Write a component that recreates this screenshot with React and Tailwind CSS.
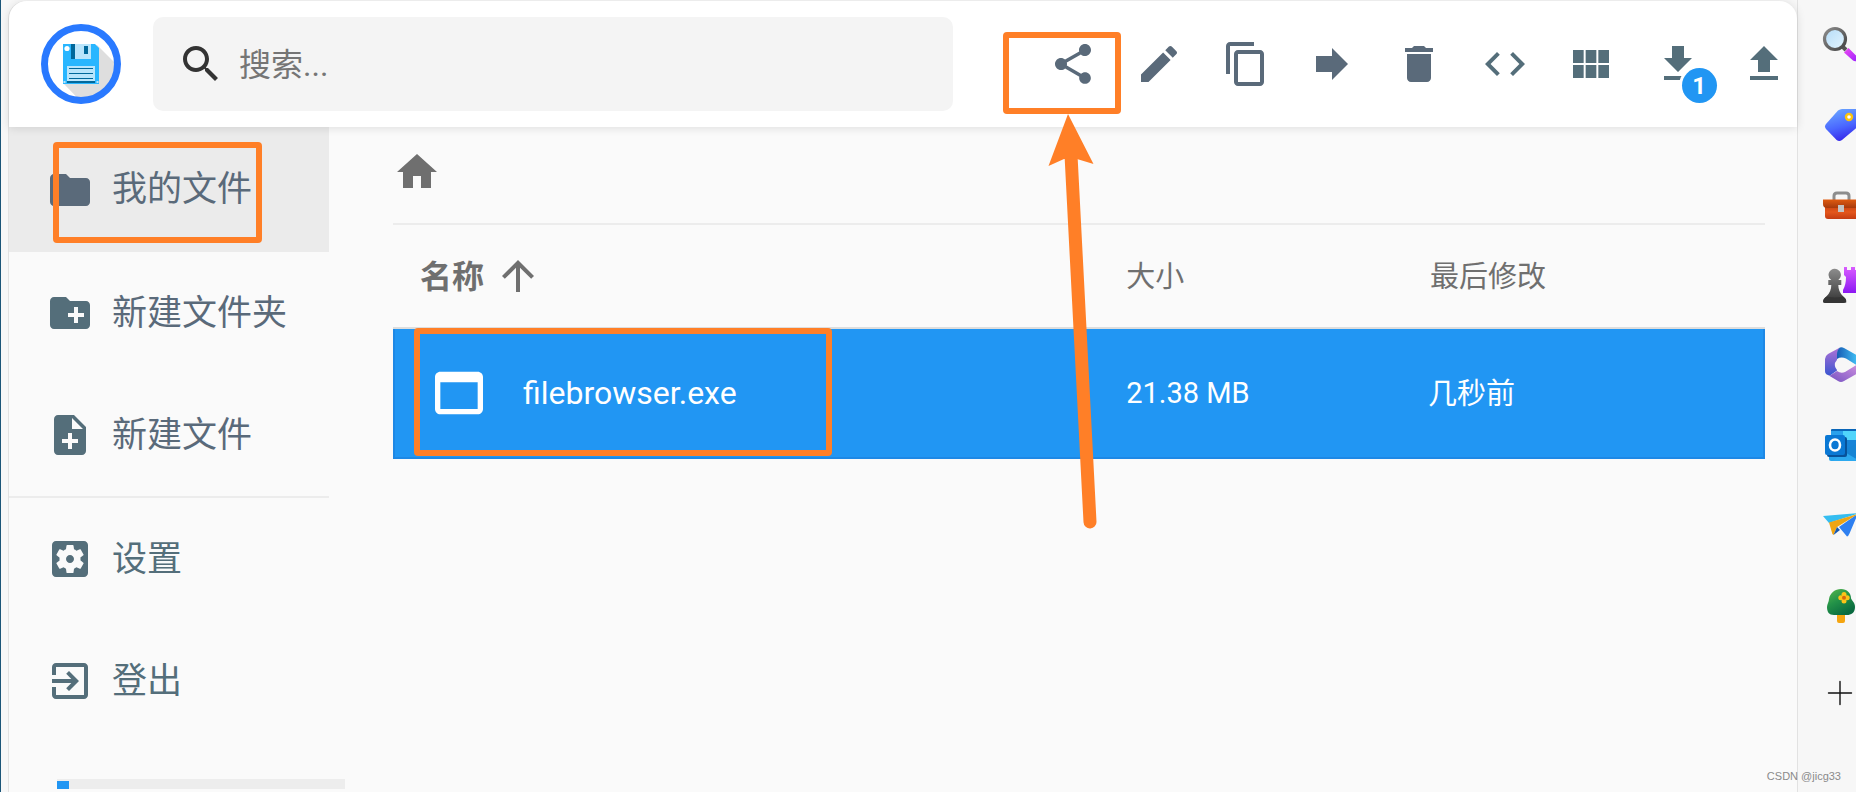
import { useState } from 'react';

const ICONS = {
  search: 'M15.5 14h-.79l-.28-.27C15.41 12.59 16 11.11 16 9.5 16 5.91 13.09 3 9.5 3S3 5.91 3 9.5 5.91 16 9.5 16c1.61 0 3.09-.59 4.23-1.57l.27.28v.79l5 4.99L20.49 19l-4.99-5zm-6 0C7.01 14 5 11.99 5 9.5S7.01 5 9.5 5 14 7.01 14 9.5 11.99 14 9.5 14z',
  share: 'M18 16.08c-.76 0-1.44.3-1.96.77L8.91 12.7c.05-.23.09-.46.09-.7s-.04-.47-.09-.7l7.05-4.11c.54.5 1.25.81 2.04.81 1.66 0 3-1.34 3-3s-1.34-3-3-3-3 1.34-3 3c0 .24.04.47.09.7L8.04 9.81C7.5 9.31 6.79 9 6 9c-1.66 0-3 1.34-3 3s1.34 3 3 3c.79 0 1.5-.31 2.04-.81l7.12 4.16c-.05.21-.08.43-.08.65 0 1.61 1.31 2.92 2.92 2.92s2.92-1.31 2.92-2.92-1.31-2.92-2.92-2.92z',
  edit: 'M3 17.25V21h3.75L17.81 9.94l-3.75-3.75L3 17.25zM20.71 7.04c.39-.39.39-1.02 0-1.41l-2.34-2.34c-.39-.39-1.02-.39-1.41 0l-1.83 1.83 3.75 3.75 1.83-1.83z',
  copy: 'M16 1H4c-1.1 0-2 .9-2 2v14h2V3h12V1zm3 4H8c-1.1 0-2 .9-2 2v14c0 1.1.9 2 2 2h11c1.1 0 2-.9 2-2V7c0-1.1-.9-2-2-2zm0 16H8V7h11v14z',
  forward: 'M12 8V4l8 8-8 8v-4H4V8z',
  delete: 'M6 19c0 1.1.9 2 2 2h8c1.1 0 2-.9 2-2V7H6v12zM19 4h-3.5l-1-1h-5l-1 1H5v2h14V4z',
  code: 'M9.4 16.6L4.8 12l4.6-4.6L8 6l-6 6 6 6 1.4-1.4zm5.2 0l4.6-4.6-4.6-4.6L16 6l6 6-6 6-1.4-1.4z',
  module: 'M14.67 5v6.5H9.33V5h5.34zm1 6.5H21V5h-5.33v6.5zm-1 7.5v-6.5H9.33V19h5.34zm1-6.5V19H21v-6.5h-5.33zm-7.34 0H3V19h5.33v-6.5zm0-1V5H3v6.5h5.33z',
  download: 'M19 9h-4V3H9v6H5l7 7 7-7zM5 18v2h14v-2H5z',
  upload: 'M9 16h6v-6h4l-7-7-7 7h4zm-4 2h14v2H5z',
  folder: 'M10 4H4c-1.1 0-1.99.9-1.99 2L2 18c0 1.1.9 2 2 2h16c1.1 0 2-.9 2-2V8c0-1.1-.9-2-2-2h-8l-2-2z',
  newFolder: 'M20 6h-8l-2-2H4c-1.11 0-1.99.89-1.99 2L2 18c0 1.11.89 2 2 2h16c1.11 0 2-.89 2-2V8c0-1.11-.89-2-2-2zm-1 8h-3v3h-2v-3h-3v-2h3V9h2v3h3v2z',
  newFile: 'M14 2H6c-1.1 0-1.99.9-1.99 2L4 20c0 1.1.89 2 1.99 2H18c1.1 0 2-.9 2-2V8l-6-6zm2 14h-3v3h-2v-3H8v-2h3v-3h2v3h3v2zm-3-7V3.500L18.500 9H13z',
  settings: 'M12 10c-1.100 0-2 .9-2 2s.9 2 2 2 2-.9 2-2-.9-2-2-2zm7-7H5c-1.110 0-2 .9-2 2v14c0 1.100.89 2 2 2h14c1.110 0 2-.9 2-2V5c0-1.100-.89-2-2-2zm-1.750 9c0 .23-.02.46-.05.68l1.480 1.160c.13.110.17.3.08.45l-1.400 2.420c-.09.150-.27.210-.43.150l-1.740-.7c-.36.280-.76.510-1.180.690l-.26 1.850c-.03.170-.18.3-.35.3h-2.800c-.17 0-.32-.13-.35-.29l-.26-1.850c-.43-.18-.82-.41-1.180-.69l-1.740.7c-.16.060-.34 0-.43-.15l-1.400-2.420c-.09-.15-.05-.34.080-.45l1.480-1.160c-.03-.23-.05-.46-.05-.69s.020-.46.050-.68l-1.480-1.160c-.13-.11-.17-.3-.08-.45l1.400-2.420c.090-.15.270-.21.430-.15l1.740.7c.360-.28.760-.51 1.180-.69l.260-1.850c.030-.17.180-.3.350-.3h2.800c.170 0 .320.130.350.290l.260 1.850c.430.180.820.410 1.180.690l1.740-.7c.160-.06.340 0 .430.150l1.400 2.420c.090.150.050.340-.08.450l-1.480 1.160c.030.230.050.460.050.690z',
  logout: 'M10.09 15.59L11.5 17l5-5-5-5-1.410 1.410L12.670 11H3v2h9.670l-2.580 2.590zM19 3H5c-1.110 0-2 .9-2 2v4h2V5h14v14H5v-4H3v4c0 1.100.89 2 2 2h14c1.100 0 2-.9 2-2V5c0-1.100-.9-2-2-2z',
  home: 'M10 20v-6h4v6h5v-8h3L12 3 2 12h3v8z',
  up: 'M4 12l1.410 1.410L11 7.830V20h2V7.830l5.580 5.590L20 12l-8-8-8 8z',
  window: 'M19 4H5c-1.110 0-2 .9-2 2v12c0 1.100.89 2 2 2h14c1.100 0 2-.9 2-2V6c0-1.100-.89-2-2-2zm0 14H5V8h14v10z',
};

function Icon({ name, className = 'size-12' }) {
  return (
    <svg className={'shrink-0 ' + className} viewBox="0 0 24 24" fill="currentColor" aria-hidden="true">
      <path d={ICONS[name]} />
    </svg>
  );
}

function Logo() {
  return (
    <svg className="size-20 shrink-0" viewBox="0 0 80 80" role="img" aria-label="File Browser">
      <clipPath id="logo-disc"><circle cx="40" cy="40" r="34" /></clipPath>
      <circle cx="40" cy="40" r="36.5" fill="#fff" />
      <path d="M56 21L90 55V90H52L23 60z" fill="#dedede" clipPath="url(#logo-disc)" />
      <circle cx="40" cy="40" r="36.5" fill="none" stroke="#2979ff" strokeWidth="7" />
      <path d="M22 20h32l4 4v36H22z" fill="#29b6ff" />
      <path d="M30 20h4v15h-4z" fill="#00689b" />
      <path d="M34 20h16v15H34z" fill="#b9e5fc" />
      <path d="M43 22h4v8h-4z" fill="#00689b" />
      <circle cx="26" cy="24.500" r="2.600" fill="#fff" />
      <path d="M26 42h28v15H26z" fill="#b9e5fc" />
      <path d="M28 44.500h24M28 49.500h24M28 54.500h24" stroke="#00689b" strokeWidth="1.200" />
      <path d="M26 57h28v2H26z" fill="#00689b" />
      <path d="M22.500 57h2v2h-2zM55.500 57h2v2h-2z" fill="#b9e5fc" />
    </svg>
  );
}

const ACTIONS = [
  { icon: 'share', label: '分享', color: 'text-[#5a6a7a]' },
  { icon: 'edit', label: '重命名', color: 'text-[#5a6a7a]' },
  { icon: 'copy', label: '复制', color: 'text-[#5a6a7a]' },
  { icon: 'forward', label: '移动', color: 'text-[#5a6a7a]' },
  { icon: 'delete', label: '删除', color: 'text-[#5a6a7a]' },
  { icon: 'code', label: '命令行', color: 'text-[#546e7a]' },
  { icon: 'module', label: '切换视图', color: 'text-[#546e7a]' },
  { icon: 'download', label: '下载', color: 'text-[#546e7a]', count: 1 },
  { icon: 'upload', label: '上传', color: 'text-[#546e7a]' },
];

function Header() {
  const [query, setQuery] = useState('');
  return (
    <header className="relative z-10 flex h-[126px] items-center rounded-t-[18px] bg-white pl-8 pr-[9px] shadow-[0_1px_10px_rgba(0,0,0,0.12)]">
      <Logo />
      <label className="ml-8 flex h-[94px] min-w-0 max-w-[800px] flex-1 items-center gap-3.5 rounded-[10px] bg-[#f4f4f4] pl-6 text-[#333]">
        <Icon name="search" />
        <input
          type="text"
          aria-label="搜索"
          placeholder="搜索..."
          value={query}
          onChange={(e) => setQuery(e.target.value)}
          className="min-w-0 flex-1 bg-transparent pt-0.5 text-[32px] text-[#333] outline-none placeholder:text-[#757575]"
        />
      </label>
      <div className="ml-auto flex w-[739px] shrink-0 justify-between">
        {ACTIONS.map((a) => (
          <button key={a.icon} type="button" aria-label={a.label} className={'relative ' + a.color}>
            <Icon name={a.icon} />
            {a.count && (
              <span className="absolute left-7 top-7 flex size-[35px] items-center justify-center rounded-full bg-[#2196f3] text-2xl font-bold text-white ring-[3px] ring-white">
                {a.count}
              </span>
            )}
          </button>
        ))}
      </div>
    </header>
  );
}

function NavItem({ icon, children, iconColor = 'text-[#546e7a]', textColor = 'text-[#546e7a]', box = 'h-[122px]' }) {
  return (
    <button type="button" className={'flex w-80 items-center gap-[18px] pl-[37px] text-[35px] ' + box}>
      <span className={iconColor}><Icon name={icon} /></span>
      <span className={'pt-0.5 ' + textColor}>{children}</span>
    </button>
  );
}

function Sidebar() {
  return (
    <nav className="w-[340px] shrink-0">
      <NavItem icon="folder" iconColor="text-[#5a6a7a]" textColor="text-[#5a6a7a]" box="h-[125px] bg-[#ebebeb]">我的文件</NavItem>
      <NavItem icon="newFolder" textColor="text-[#5a6a7a]">新建文件夹</NavItem>
      <NavItem icon="newFile" textColor="text-[#5a6a7a]">新建文件</NavItem>
      <div className="w-80 border-t-2 border-[#ececec]">
        <NavItem icon="settings">设置</NavItem>
        <NavItem icon="logout">登出</NavItem>
      </div>
      <div className="ml-12 mt-[37px] w-72 bg-[#ededed] pt-0.5">
        <div className="h-2 w-3 bg-[#2196f3]" />
      </div>
    </nav>
  );
}

function Listing() {
  return (
    <main className="min-w-0 flex-1 pl-11 pr-8">
      <div className="flex h-[98px] items-center border-b-2 border-[#ececec] pb-1.5 text-[#6f6f6f]">
        <a href="#home" aria-label="主页"><Icon name="home" /></a>
      </div>
      <table className="w-full table-fixed border-separate border-spacing-0 text-left text-[29px]">
        <thead>
          <tr className="h-[104px] text-[#6f6f6f]">
            <th className="w-[53%] border-b-2 border-[#ddd] pl-[27px] text-[32px] font-bold">
              <button type="button" className="flex items-center gap-2.5">
                <span className="pt-0.5">名称</span>
                <Icon name="up" />
              </button>
            </th>
            <th className="w-[22%] border-b-2 border-[#ddd] pl-1.5 pt-1 font-normal">大小</th>
            <th className="border-b-2 border-[#ddd] pl-2 pt-1 font-normal">最后修改</th>
          </tr>
        </thead>
        <tbody>
          <tr className="h-[130px] bg-[#2196f3] text-white">
            <td className="border-b-2 border-l-2 border-[#1e88e5] pl-8">
              <div className="flex items-center gap-8 text-[32px]">
                <Icon name="window" className="size-16" />
                filebrowser.exe
              </div>
            </td>
            <td className="border-b-2 border-[#1e88e5] pl-1.5 pt-0.5">21.38 MB</td>
            <td className="border-b-2 border-r-2 border-[#1e88e5] pl-1.5 pt-1">几秒前</td>
          </tr>
        </tbody>
      </table>
    </main>
  );
}

function Rail() {
  const svg = 'size-10 shrink-0';
  return (
    <aside className="flex w-[59px] shrink-0 flex-col gap-10 overflow-hidden border-l border-[#e2e2e2] bg-[#f7f7f7] pl-[22px] pt-[25px]">
      <svg className={svg} viewBox="0 0 40 40">
        <defs>
          <linearGradient id="lens" x1="0" y1="0" x2="1" y2="1"><stop stopColor="#b5dcf8" /><stop offset="1" stopColor="#e4f5ff" /></linearGradient>
          <linearGradient id="rim" x1="0" y1="0" x2="1" y2="1"><stop stopColor="#8c8c8c" /><stop offset="1" stopColor="#444" /></linearGradient>
          <linearGradient id="grip" x1="0" y1="0" x2="1" y2="1"><stop stopColor="#f04cf0" /><stop offset="1" stopColor="#9a20ff" /></linearGradient>
        </defs>
        <path d="M22 21l4 4" stroke="#555" strokeWidth="4" />
        <circle cx="15" cy="14" r="10.500" fill="url(#lens)" stroke="url(#rim)" strokeWidth="3.200" />
        <path d="M24 27.500l4.500-4.500 9 9q2 2-.2 3.500-2 1.500-4.300 0z" fill="url(#grip)" />
      </svg>
      <svg className={svg} viewBox="0 0 40 40">
        <defs><linearGradient id="tag" x1=".3" y1="0" x2=".6" y2="1"><stop stopColor="#6aa5ff" /><stop offset=".55" stopColor="#4a67ff" /><stop offset="1" stopColor="#3422e8" /></linearGradient></defs>
        <path d="M22 4h18v16L22 35q-2.700 2.200-5.400 0L6 24q-2-2.300 0-5L18 5.500Q20 4 22 4z" fill="url(#tag)" />
        <circle cx="29" cy="12" r="3" fill="#fff" stroke="#fbc40c" strokeWidth="2.400" />
      </svg>
      <svg className={svg} viewBox="0 0 40 40">
        <defs>
          <linearGradient id="lid" x1="0" y1="0" x2="0" y2="1"><stop stopColor="#e05b10" /><stop offset="1" stopColor="#a63a0d" /></linearGradient>
          <linearGradient id="box" x1="0" y1="0" x2="0" y2="1"><stop stopColor="#c4400e" /><stop offset=".5" stopColor="#e4571c" /><stop offset="1" stopColor="#c43c12" /></linearGradient>
        </defs>
        <path d="M14 15v-4q0-3 3-3h9q3 0 3 3v4" fill="none" stroke="#8d8d8d" strokeWidth="3" />
        <path d="M5 20h35v14H8q-3 0-3-3z" fill="url(#box)" />
        <path d="M3 14.500h37V23H7q-4 0-4-4z" fill="url(#lid)" />
        <path d="M18 20h6v7h-6z" fill="#c4c4c4" />
      </svg>
      <svg className={svg} viewBox="0 0 40 40">
        <defs>
          <linearGradient id="pawn" x1="0" y1="0" x2="0" y2="1"><stop stopColor="#8c8c8c" /><stop offset="1" stopColor="#333" /></linearGradient>
          <linearGradient id="rook" x1="0" y1="0" x2="0" y2="1"><stop stopColor="#d95cff" /><stop offset="1" stopColor="#8c18f2" /></linearGradient>
        </defs>
        <path d="M24 2h3v3h4V2h4v3h5v23H23v-3q3-5 3-13l-2-2z" fill="url(#rook)" />
        <path d="M8.500 10a6.200 6.200 0 1 1 9.800 5h3v5h-3q0 7 5 11.500 3 2 3 6-11 1.200-23 0 0-4 3-6 5-4.500 5-11.500h-3v-5h3a6.200 6.200 0 0 1-2.800-5z" fill="url(#pawn)" />
        <path d="M7 31.500q8 2 16 0 3 2 3.300 4.500-.3 2-3 2H6q-3 0-3-2 .5-3 4-4.500z" fill="#353535" />
      </svg>
      <svg className={svg} viewBox="0 0 40 40">
        <defs>
          <linearGradient id="m1" x1="0" y1="0" x2="0" y2="1"><stop stopColor="#b072d6" /><stop offset="1" stopColor="#3b56d0" /></linearGradient>
          <linearGradient id="m2" x1="0" y1="0" x2="1" y2="0"><stop stopColor="#165bb4" /><stop offset="1" stopColor="#43c4f8" /></linearGradient>
          <linearGradient id="m3" x1="0" y1="1" x2="1" y2="0"><stop stopColor="#7351c0" /><stop offset="1" stopColor="#cf91e0" /></linearGradient>
        </defs>
        <path d="M20 2.500L8 9q-3 2-3 5v12q0 3 3 4l2 .5 7-5V10q0-4 3-7.500z" fill="url(#m1)" />
        <path d="M17 14V9q0-4 3-6.500 2-.8 4 .5l14 8v10l-12-7.500q-5-2-9 .5z" fill="url(#m2)" />
        <path d="M8 30l10 6q3 1.800 6 0l14-8v-9l-13 8q-4 2-8-1l-7 4.500z" fill="url(#m3)" />
        <circle cx="21" cy="20" r="6.200" fill="#f7f7f7" />
      </svg>
      <svg className={svg} viewBox="0 0 40 40">
        <path d="M12 4h28v18H11V5q0-1 1-1z" fill="#0a66b8" />
        <path d="M11 6h12v10H11z" fill="#2aa1ec" />
        <path d="M23 6h17v13H23z" fill="#50d5fb" />
        <path d="M23 15h17v14H23z" fill="#1784d8" />
        <path d="M9 20l31 12v4H11q-2 0-2-2z" fill="#28a5ed" />
        <path d="M40 17v19l-17-10z" fill="#1684d4" />
        <path d="M23 27l17 9H13z" fill="#2ca9ef" />
        <rect x="7" y="12" width="20" height="20" rx="2" fill="#07529a" />
        <rect x="5" y="10" width="20" height="20" rx="2" fill="#0a78d4" />
        <ellipse cx="15" cy="20" rx="5" ry="5.500" fill="none" stroke="#fff" strokeWidth="2.600" />
      </svg>
      <svg className={svg} viewBox="0 0 40 40">
        <path d="M3 11l37-3-31 10z" fill="#35bdf0" />
        <path d="M38 8.500L19 22l8 9.500q1.500-.5 2.500-3z" fill="#2f80f0" />
        <path d="M9 17.500L38 9 17 22l-3.500 8q-1.500-1-2-4z" fill="#f0a512" />
        <path d="M17 22l3 3-6.500 5z" fill="#1458b4" />
      </svg>
      <svg className={svg} viewBox="0 0 40 40">
        <defs><linearGradient id="tree" x1="0" y1="0" x2=".6" y2="1"><stop stopColor="#5ab84c" /><stop offset=".5" stopColor="#239248" /><stop offset="1" stopColor="#0a6a40" /></linearGradient></defs>
        <path d="M17 28h8v8q0 2-2 2h-4q-2 0-2-2z" fill="#f5a510" />
        <path d="M21 4c6 0 10 4 10 9 0 2 4 4 4 9 0 6-4 8-8 8H14c-5 0-7-3-7-8 0-3 2-5 2-8C10 8 15 4 21 4z" fill="url(#tree)" />
        <g fill="#fcc419">
          <circle cx="24" cy="9.500" r="2.500" /><circle cx="24" cy="16" r="2.500" />
          <circle cx="20.800" cy="12.700" r="2.500" /><circle cx="27.200" cy="12.700" r="2.500" />
        </g>
        <circle cx="24" cy="12.700" r="2" fill="#d8680c" />
      </svg>
      <button type="button" aria-label="添加" className="mt-2">
        <svg className={svg} viewBox="0 0 40 40">
          <path d="M20 8.500v23M8.500 20h23" stroke="#111" strokeWidth="1.400" strokeLinecap="round" />
        </svg>
      </button>
    </aside>
  );
}

// Orange marks drawn over the page
function Marks() {
  const box = 'absolute rounded-[4px] border-[6px] border-[#ff7f27] ';
  return (
    <div className="pointer-events-none absolute inset-0 z-20">
      <div className={box + 'left-[52px] top-[142px] h-[101px] w-[209px]'} />
      <div className={box + 'left-[1002px] top-8 h-[82px] w-[118px]'} />
      <div className={box + 'left-[413px] top-[328px] h-32 w-[418px]'} />
      <svg className="absolute left-[1039px] top-[110px] h-[430px] w-[70px]" viewBox="0 0 70 430">
        <path d="M31 45L50 412" stroke="#ff7f27" strokeWidth="13" strokeLinecap="round" />
        <path d="M28 4L53.500 54 37 49H24L8.500 56z" fill="#ff7f27" />
      </svg>
      <span className="absolute bottom-2 right-[15px] font-['Liberation_Sans'] text-[11px] text-[#8a8a8a]">CSDN @jicg33</span>
    </div>
  );
}

export default function App() {
  return (
    <div className="relative flex min-h-screen overflow-hidden border-l border-[#1b5578] bg-[#f7f7f7] pl-[7px] font-['Roboto','Noto_Sans_CJK_SC',sans-serif]">
      <div className="flex min-w-0 flex-1 flex-col pt-px">
        <div className="flex-1 rounded-t-[18px] border-l border-[#e2e2e2] bg-[#fafafa]">
          <Header />
          <div className="flex">
            <Sidebar />
            <Listing />
          </div>
        </div>
      </div>
      <Rail />
      <Marks />
    </div>
  );
}
